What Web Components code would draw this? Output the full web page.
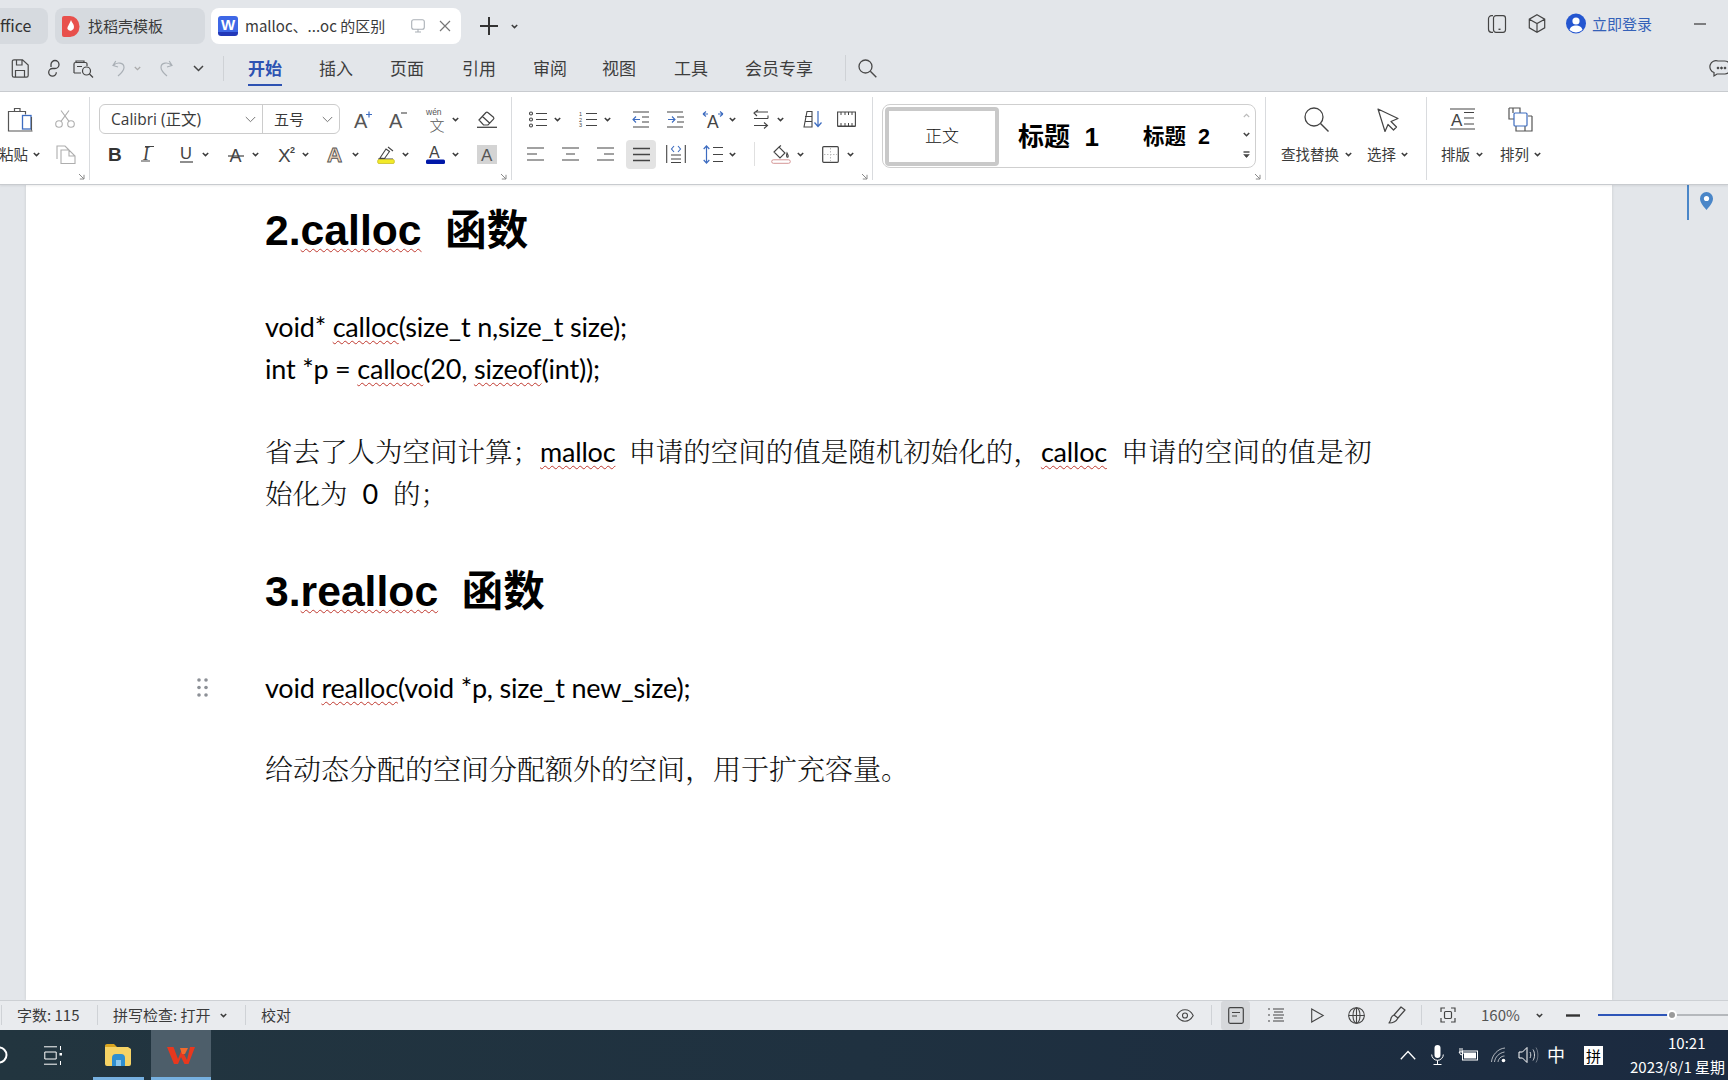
<!DOCTYPE html>
<html lang="zh"><head><meta charset="utf-8"><title>WPS</title>
<style>
html,body{margin:0;padding:0;width:1728px;height:1080px;overflow:hidden;background:#e3e6ea}
body{font-family:"Noto Sans CJK SC","Noto Sans",sans-serif}
</style></head><body>
<wps-app></wps-app>
<script>
const S='stroke="currentColor" fill="none"';
const T=(x,y,s,t,ex='')=>`<text x="${x}" y="${y}" font-size="${s}" font-family="'Liberation Sans',sans-serif" fill="currentColor" stroke="none" ${ex}>${t}</text>`;
const IC={
chev:[7,5,`<path d="M.8 1l2.7 2.6L6.2 1" stroke-width="1.5"/>`,'#3c3c3c'],
chevb:[11,7,`<path d="M1 1l4.5 4.5L10 1" stroke-width="1.5"/>`,'#444'],
chevg:[7,5,`<path d="M.8 1l2.7 2.6L6.2 1" stroke-width="1.3"/>`,'#aaa'],
chevl:[11,7,`<path d="M.8 1l4.7 4.7L10.2 1" stroke-width="1"/>`,'#777'],
save:[18,19,`<path d="M3 .8h8.5l5.7 5.2v10.5a1.7 1.7 0 0 1-1.7 1.7H3a1.7 1.7 0 0 1-1.7-1.7V2.500A1.7 1.700 0 0 1 3 .8zM5.500 1v5h5.500V1M4.500 18v-6.500h9V18" stroke-width="1.2"/>`,'#4a4a4a'],
link:[15,18,`<path d="M5 8V5.500a4 4 0 1 1 4 4H6.500a3.800 3.800 0 1 0 3.800 3.800" stroke-width="1.3"/>`,'#444'],
docs:[21,19,`<path d="M3 3.500V2h8v1.500M1 14V5a1.500 1.500 0 0 1 1.500-1.500h10a1.500 1.500 0 0 1 1.500 1.500v2M1 14h7M4 7.500h5" stroke-width="1.2"/><circle cx="13.500" cy="12" r="4" stroke-width="1.200"/><path d="M16.500 15l3.500 3.500" stroke-width="1.300"/>`,'#444'],
undo:[13,17,`<path d="M3.800 1L1 5.500l5 1.500M1.300 5.500C5 1.500 12 2.500 12 7.500c0 3.500-3 6-6 8.500" stroke-width="1.200"/>`,'#aab0b6'],
redo:[13,17,`<path d="M9.200 1L12 5.500 7 7M11.700 5.500C8 1.500 1 2.500 1 7.500c0 3.500 3 6 6 8.500" stroke-width="1.200"/>`,'#aab0b6'],
srch:[19,19,`<circle cx="7.500" cy="7.500" r="6.500" stroke-width="1.300"/><path d="M12.300 12.300l6 6" stroke-width="1.400"/>`,'#4a4a4a'],
bubble:[20,17,`<path d="M6 1h6a6.500 6.500 0 0 1 1 13H5l-3 2v-3.500A6 6 0 0 1 6 1z" stroke-width="1.200"/><circle cx="6" cy="8" r=".9" fill="currentColor"/><circle cx="9.500" cy="8" r=".9" fill="currentColor"/><circle cx="13" cy="8" r=".9" fill="currentColor"/>`,'#444'],
mon:[14,14,`<rect x=".7" y=".7" width="12.600" height="9.500" rx="2" stroke-width="1.100"/><path d="M4 13h6M7 10v3" stroke-width="1.100"/>`,'#aab0b6'],
x:[12,12,`<path d="M1 1l10 10M11 1L1 11" stroke-width="1.200"/>`,'#777'],
plus:[18,18,`<path d="M9 0v18M0 9h18" stroke-width="2"/>`,'#333'],
phone:[18,18,`<path d="M5 .7H3.500a3 3 0 0 0-3 3v10.600a3 3 0 0 0 3 3H5" stroke-width="1.200"/><rect x="5.500" y=".7" width="12" height="16.600" rx="2.500" stroke-width="1.200"/><path d="M10.500 14.300h2" stroke-width="1.400"/>`,'#444'],
cube:[18,19,`<path d="M9 .8l7.700 4.400v8.600L9 18.200 1.300 13.800V5.200zM1.300 5.200L9 9.600l7.700-4.400M9 9.600v8.600" stroke-width="1.200"/>`,'#444'],
user:[20,21,`<circle cx="10" cy="10.500" r="10" fill="#2456d0" stroke="none"/><circle cx="10" cy="8" r="3.600" fill="#fff" stroke="none"/><path d="M3.500 17c1-3.500 3.500-4.500 6.500-4.500s5.500 1 6.500 4.500a10 10 0 0 1-13 0z" fill="#fff" stroke="none"/>`,'#2456d0'],
min:[12,2,`<path d="M0 1h12" stroke-width="1.300"/>`,'#444'],
clip:[26,25,`<path d="M7.500 4.500H1.500V24H12M7.500 4.500V1.500h5.500v3h-5.500M13 4.500h5.500v3M12 24h13.500" stroke-width="1.200"/><rect x="15.500" y="8.500" width="8.500" height="13.500" stroke="#3d6cc0" stroke-width="1.300"/><path d="M24.500 10v13.500" stroke-width="1.100"/>`,'#555'],
sci:[20,18,`<circle cx="4" cy="14" r="3.300" stroke-width="1.100"/><circle cx="16" cy="14" r="3.300" stroke-width="1.100"/><path d="M6 11.300L14 .5M14 11.300L6 .5" stroke-width="1.100"/>`,'#aeaeae'],
copy:[20,19,`<path d="M1 14V1h8l4 4M5 18.500V5h8l6 6v7.500zM13 5v6h6" stroke-width="1.100"/>`,'#aeaeae'],
lau:[7,7,`<path d="M1 1l5 5M6 1.800V6H1.800" stroke-width="1"/>`,'#8a8a8a'],
ap:[18,18,T(0,17.500,20,'A')+`<path d="M12 4.500h6M15 1.500v6" stroke="#3d6cc0" stroke-width="1.200"/>`,'#555'],
am:[18,18,T(0,17.500,20,'A')+`<path d="M12 3h6" stroke-width="1.200"/>`,'#555'],
wen:[22,23,T(0,7,8.500,'wén','fill="#555"')+`<text x="3.500" y="23" font-size="15" font-family="'Noto Sans CJK SC'" fill="currentColor" stroke="none" font-weight="300">文</text>`,'#555'],
era:[20,18,`<path d="M2 10l7-7.500a1.300 1.300 0 0 1 1.800 0l5.700 4.800a1.300 1.300 0 0 1 0 1.800L11 15H6.500zM5.500 6.500l7 6.500" stroke-width="1.200"/><path d="M0 17.300h20" stroke-width="1.300"/>`,'#444'],
B:[12,18,T(0,16,19,'B','font-weight="bold"'),'#333'],
I2:[14,18,`<text x="2" y="15" font-size="18" font-style="italic" font-family="'Liberation Serif',serif" fill="currentColor" stroke="none">I</text><path d="M4 1.500h9M0 16h9" stroke-width="1"/>`,'#444'],
U:[13,18,T(0,14,16.500,'U')+`<path d="M0 17h13" stroke-width="1.200"/>`,'#444'],
st:[16,18,T(1.500,17,18,'A')+`<path d="M0 11h16" stroke-width="1.200"/>`,'#444'],
X2:[18,18,T(0,17,19,'X')+T(12,8,9,'2','font-weight="bold"'),'#444'],
AE:[18,18,`<text x="0" y="17" font-size="21" font-weight="bold" font-family="'Liberation Sans',sans-serif" fill="#f2d8c0" stroke="#555" stroke-width=".9">A</text>`,'#555'],
hl:[18,19,`<path d="M3 13L9 4l3.500 2.500-5 7zM11 2l5 4M1 14h15" stroke-width="1.100"/><rect x=".7" y="14.500" width="16.600" height="4" rx="1.200" fill="#f2ea28" stroke="#c8be2a" stroke-width=".8"/>`,'#444'],
Ab:[19,19,T(3,13,16,'A')+`<rect x="0" y="14.500" width="19" height="4.500" rx="1.500" fill="#0018a8" stroke="none"/>`,'#444'],
As:[20,19,`<rect width="20" height="19" fill="#d4d4d4" stroke="none"/>`+T(4,16,17,'A'),'#555'],
bul:[18,17,`<circle cx="2" cy="2.500" r="1.500" stroke-width="1.100"/><circle cx="2" cy="8.500" r="1.500" stroke-width="1.100"/><circle cx="2" cy="14.500" r="1.500" stroke-width="1.100"/><path d="M7 2.500h11M7 8.500h11M7 14.500h11" stroke-width="1.100"/>`,'#444'],
num:[18,17,T(0,5,5.500,'1')+T(0,10.500,5.500,'2')+T(0,16,5.500,'3')+`<path d="M7 2.500h11M7 8.500h11M7 14.500h11" stroke-width="1.100"/>`,'#444'],
outd:[17,17,`<path d="M1 1h16M1 16h16M10 6h7M10 11h7" stroke-width="1.100"/><path d="M8 8.500H1M4 5.500l-3 3 3 3" stroke="#3d6cc0" stroke-width="1.100"/>`,'#444'],
ind:[17,17,`<path d="M0 1h16M0 16h16M10 6h7M10 11h7" stroke-width="1.100"/><path d="M1 8.500h7M5 5.500l3 3-3 3" stroke="#3d6cc0" stroke-width="1.100"/>`,'#444'],
Aa:[20,18,T(4,17.500,17.500,'A')+`<path d="M0 4l3-2.500M0 4l3 2.500M0 4h5M20 4l-3-2.500M20 4l-3 2.500M20 4h-5" stroke="#3d6cc0" stroke-width="1.100"/>`,'#444'],
swp:[16,18,`<path d="M15 2H1.500M5 0 1 3l3 3M1 8.500h14M1 15.500h14M11 12.500l3.500 3-3.500 3M15 5.500v3" stroke-width="1.100"/>`,'#444'],
sort:[20,18,`<path d="M2 17L5 1.500h5V17zM3.500 11.500H10M3 6.500h7" stroke-width="1.100"/><path d="M16 1v15M12.500 12.500l3.500 4 3.500-4" stroke="#3d6cc0" stroke-width="1.200"/>`,'#444'],
rul:[19,16,`<path d="M.6 15V1h17.800v14zM.6 15.400h17.800" stroke-width="1.100"/><path d="M4 1v3M8 1v3M11.500 1v3M15 1v3M4 15v-3M8 15v-3M11.500 15v-3M15 15v-3" stroke-width="1"/>`,'#444'],
al:[17,16,`<path d="M0 2h17M0 8h10M0 14h17" stroke-width="1.200"/>`,'#444'],
ac:[17,16,`<path d="M0 2h17M4 8h9M0 14h17" stroke-width="1.200"/>`,'#444'],
ar:[17,16,`<path d="M0 2h17M7 8h10M0 14h17" stroke-width="1.200"/>`,'#444'],
aj:[17,15,`<path d="M0 1.500h17M0 7.500h17M0 13.500h17" stroke-width="1.400"/>`,'#444'],
dist:[20,18,`<path d="M.7 0v18M19.300 0v18M5 10h10M5 14h10M5 17.500h10" stroke-width="1.100"/><path d="M8 1L5.500 4 8 7M12 1l2.500 3L12 7" stroke="#3d6cc0" stroke-width="1.100"/>`,'#444'],
lsp:[20,19,`<path d="M3.500 .8v17.400M.7 4l2.800-3.200L6.300 4M.7 15l2.800 3.200L6.300 15" stroke="#3d6cc0" stroke-width="1.200"/><path d="M10 2.500h10M10 9.500h10M10 16.500h10" stroke-width="1.200"/>`,'#444'],
fill:[20,19,`<path d="M3 7l5-5 6 6-5 5zM8 2l2-1.500M16 8c1 2 2 3 1 4s-2-1-1-4z" stroke-width="1.100"/><rect x=".7" y="14.800" width="18.600" height="3.500" rx="1.700" stroke="#d08a8a" stroke-width=".9"/>`,'#444'],
bor:[17,17,`<rect x=".7" y=".7" width="15.600" height="15.600" rx="1" stroke-width="1.200"/><path d="M8.500 2v13M2 8.500h13" stroke="#bbb" stroke-width="1" stroke-dasharray="1.500 1.500"/>`,'#444'],
up:[7,5,`<path d="M.8 4l2.700-2.700L6.200 4" stroke-width="1.100"/>`,'#bbb'],
dn:[7,5,`<path d="M.8 1l2.700 2.700L6.200 1" stroke-width="1.600"/>`,'#444'],
mor:[7,8,`<path d="M.5 1h6" stroke-width="1.400"/><path d="M.8 3.200L3.500 6.400l2.700-3.200" fill="#444" stroke-width="1"/>`,'#444'],
find:[25,25,`<circle cx="10" cy="10" r="9" stroke-width="1.300"/><path d="M16.500 16.500l8 8" stroke-width="1.400"/>`,'#444'],
cur:[22,22,`<path d="M1 1l20 9.500-7 3 5.500 5.500-3 3-5.500-5.500-3 7z" stroke-width="1.200" stroke-linejoin="round"/>`,'#444'],
lay:[25,22,`<path d="M0 1h25M0 21h25" stroke-width="1.200"/><path d="M14 4.500h10M14 10h10M14 16h10" stroke-width="1.100"/>`+T(1,18,17,'A'),'#444'],
arr:[25,25,`<path d="M5 6V1h7v5M1 1h11v5M1 1v11h5M17 19v5H8v-5M24 9h-4M24 9v15h-7" stroke-width="1.200"/><rect x="6" y="6" width="13" height="13" rx="1" stroke="#3d6cc0" stroke-width="1.200"/>`,'#555'],
eye:[18,13,`<path d="M.8 6.500C3 2.500 6 .8 9 .8s6 1.700 8.200 5.700C15 10.500 12 12.200 9 12.200S3 10.500.8 6.500z" stroke-width="1.100"/><circle cx="9" cy="6.500" r="2.500" stroke-width="1.100"/>`,'#444'],
pv:[16,17,`<rect x=".7" y=".7" width="14.600" height="15.600" rx="1.500" stroke-width="1.200"/><path d="M4 5.500h8M4 9h5" stroke-width="1.200"/>`,'#444'],
ol:[16,14,`<path d="M5 1h11M5 7h11M5 13h11M0 1h2M0 7h2M0 13h2M6 4h9M6 10h9" stroke-width="1.100"/>`,'#444'],
pl:[13,15,`<path d="M.7.9l11.500 6.600L.7 14.100z" stroke-width="1.100"/>`,'#444'],
gl:[17,17,`<circle cx="8.500" cy="8.500" r="7.800" stroke-width="1.100"/><ellipse cx="8.500" cy="8.500" rx="3.500" ry="7.800" stroke-width="1.100"/><path d="M.7 8.500h15.600M8.500.7v15.600" stroke-width="1.100"/>`,'#444'],
pen:[18,18,`<path d="M6 9l7-8 4 3-7 8zM6 9c-3 1-3 3-3.500 5.500L1 17c3 0 7-1 9-5z" stroke-width="1.200" stroke-linejoin="round"/>`,'#444'],
foc:[16,16,`<path d="M1 5V1h4M11 1h4v4M15 11v4h-4M5 15H1v-4" stroke-width="1.200"/><rect x="4.500" y="4.500" width="7" height="7" rx="1.200" stroke-width="1.200"/>`,'#444'],
zm:[14,3,`<path d="M0 1.500h14" stroke-width="2.400"/>`,'#333'],
cor:[8,18,`<circle cx="-1" cy="9" r="7.500" stroke-width="2"/>`,'#fff'],
tv:[19,19,`<path d="M0 .8h13M0 18.200h13M.8 6h11.400v7H.8zM16.500 0v4M16.500 15v4" stroke-width="1"/><rect x="15.500" y="7" width="2.500" height="2.500" fill="#fff" stroke="none"/>`,'#fff'],
ex:[27,24,`<path d="M0 4a2 2 0 0 1 2-2h7l2 2h12l3 2v15a2 2 0 0 1-2 2H2a2 2 0 0 1-2-2z" fill="#f6d365" stroke="none"/><path d="M0 3a2 2 0 0 1 2-2h7l3 3H0z" fill="#d9a520" stroke="none"/><path d="M7 23v-8a4 4 0 0 1 4-4h5a4 4 0 0 1 4 4v8h-4v-6h-5v6z" fill="#2f8fd0" stroke="none"/><rect x="11" y="17" width="5" height="6" fill="#8cc8ec" stroke="none"/>`,'#fff'],
wps:[30,20,`<path d="M1 2h6.500l4.500 12L16 4h4l-2 5 3 6 3-13h5l-6.500 17h-4L15 12l-3 7H8z" fill="#e8381e" stroke="none"/><path d="M14 3h8l-3 6h-3z" fill="#f26a2c" stroke="none"/>`,'#e8381e'],
car:[16,10,`<path d="M.8 9.200L8 1.500l7.200 7.700" stroke-width="1.300"/>`,'#fff'],
mic:[13,20,`<rect x="3.500" y="0" width="6" height="13" rx="3" fill="#fff" stroke="none"/><path d="M.7 9.500a5.800 5.800 0 0 0 11.600 0M6.500 15.500V20M2.500 19.500h8" stroke-width="1"/>`,'#fff'],
bat:[19,14,`<rect x="3.500" y="3" width="15" height="9" stroke-width="1"/><rect x="5" y="4.500" width="12" height="6" fill="#fff" stroke="none"/><path d="M1 0v4M3 0v4M0 4h4v2L2 7z" stroke-width="1"/>`,'#fff'],
wf:[16,16,`<path d="M.5 15C1 8 7 1.500 14 1M3.500 15c.5-5 4.500-9 10-10M7 15c.3-3 3-6 6.500-6" stroke-width="1" opacity=".65"/><circle cx="12.500" cy="13.500" r="1.800" fill="#fff" stroke="none"/>`,'#fff'],
spk:[20,18,`<path d="M1 6h3.500L9 1.500v15L4.500 12H1z" stroke-width="1"/><path d="M12 6c1 1.800 1 4.200 0 6M15 3.500c2 3 2 8 0 11" stroke-width="1" opacity=".8"/><path d="M18 1.500c2.500 4 2.500 11 0 15" stroke-width="1" opacity=".35"/>`,'#fff'],
pin:[13,18,`<path d="M6.500 0a6.500 6.500 0 0 1 6.500 6.500C13 11 9 15 6.500 18 4 15 0 11 0 6.500A6.500 6.500 0 0 1 6.500 0z" fill="#4a86c8" stroke="none"/><circle cx="6.500" cy="6.500" r="2.600" fill="#fff" stroke="none"/>`,'#4a86c8'],
dots:[11,19,`<g fill="#8c9096" stroke="none"><circle cx="2" cy="2" r="1.800"/><circle cx="9" cy="2" r="1.800"/><circle cx="2" cy="9.500" r="1.800"/><circle cx="9" cy="9.500" r="1.800"/><circle cx="2" cy="17" r="1.800"/><circle cx="9" cy="17" r="1.800"/></g>`,'#888']
};
class XI extends HTMLElement{connectedCallback(){ if(this.shadowRoot)return;
 const [w,h,b,c]=IC[this.getAttribute('n')];
 const m=this.getAttribute('m')||0;
 this.attachShadow({mode:'open'}).innerHTML=`<style>:host{display:inline-flex;flex:none;width:${w}px;height:${h}px;margin-left:${m}px;color:${c}}svg{display:block;overflow:visible}</style><svg width="${w}" height="${h}" viewBox="0 0 ${w} ${h}" ${S}>${b}</svg>`;
}}
customElements.define('x-i',XI);
class XT extends HTMLElement{connectedCallback(){ if(this.shadowRoot)return;
 const g=k=>this.getAttribute(k);
 this.attachShadow({mode:'open'}).innerHTML=`<style>:host{display:inline-block;flex:none;white-space:nowrap;margin-left:${g('m')||0}px;${g('w')?`width:${g('w')}px;`:''}font-size:${g('s')||15}px;color:${g('c')||'#3a3a3a'};font-weight:${g('fw')||400};line-height:1.2}</style><slot></slot>`;
}}
customElements.define('x-t',XT);
class XD extends HTMLElement{connectedCallback(){ if(this.shadowRoot)return;
 this.attachShadow({mode:'open'}).innerHTML=`<style>:host{display:block;flex:none;width:1px;height:${this.getAttribute('h')||24}px;margin-left:${this.getAttribute('m')||0}px;background:${this.getAttribute('c')||'#cfd2d6'}}</style>`;
}}
customElements.define('x-d',XD);
const plain=(name,css,html='<slot></slot>')=>customElements.define(name,class extends HTMLElement{constructor(){super();this.attachShadow({mode:'open'}).innerHTML=`<style>${css}</style>${html}`}});

plain('app-tab',`:host{display:flex;flex:none;align-items:center;height:36px;border-radius:8px;background:#d6dadf;box-sizing:border-box}
:host([active]){background:#fff}`);
plain('red-logo',`:host{display:block;flex:none;width:18px;height:21px;margin-left:7px}`,`<svg width="18" height="21" viewBox="0 0 18 21"><path d="M2 0h6a9.500 10.500 0 0 1 0 21H2a2 2 0 0 1-2-2V2a2 2 0 0 1 2-2z" fill="#e8504c"/><path d="M9 4c1 3 3 4 3 7a3.500 3.500 0 0 1-6.500 2C5 11 7 9 9 4z" fill="#fff"/></svg>`);
plain('w-logo',`:host{display:flex;flex:none;width:20px;height:20px;margin-left:7px;background:linear-gradient(#3e67e6 80%,#2238b8 80%);border-radius:3px;color:#fff;font:bold 15px "Liberation Sans",sans-serif;align-items:flex-start;justify-content:center;line-height:18px}`);
plain('title-bar',`:host{display:flex;flex:none;height:45px;align-items:flex-end;box-sizing:border-box;padding-bottom:1px;background:#e3e6ea}`);
plain('menu-bar',`:host{display:flex;flex:none;height:47px;align-items:center;background:#e3e6ea;box-sizing:border-box;border-bottom:1px solid #c9ccd0;overflow:hidden}`);
plain('menu-tab',`:host{display:block;flex:none;position:relative;font-size:17px;color:#3d3d3d;line-height:24px;margin-left:var(--m,0)}
:host([on]){color:#2d52b2;font-weight:700}
:host([on])::after{content:"";position:absolute;left:0;right:0;top:28px;height:2px;background:#2d52b2}`);
plain('rib-bon',`:host{display:flex;flex:none;height:93px;background:#fff;box-sizing:border-box;border-bottom:1px solid #c8cbcf;box-shadow:0 1px 2px rgba(0,0,0,.08);position:relative;z-index:2;padding-top:5px;overflow:hidden}`);
plain('rib-group',`:host{display:flex;flex-direction:column;flex:none;height:83px;box-sizing:border-box;border-right:1px solid #d9dbde;position:relative}`);
plain('row-a',`:host{display:flex;align-items:center;height:44px;flex:none}`);
plain('row-b',`:host{display:flex;align-items:center;height:26px;flex:none}`);
plain('lau-pos',`:host{position:absolute;right:4px;top:76px;display:block;line-height:0}`);
plain('font-combo',`:host{display:flex;align-items:center;flex:none;width:241px;height:30px;box-sizing:border-box;margin-left:9px;border:1px solid #ccc;border-radius:6px;font-size:15px;color:#3a3a3a}`);
plain('sel-btn',`:host{display:flex;align-items:center;justify-content:center;flex:none;width:30px;height:29px;margin-left:12px;background:#e3e3e3;border-radius:4px}`);
plain('style-box',`:host{display:flex;align-items:center;flex:none;width:374px;height:64px;box-sizing:border-box;margin:7px 0 0 9px;border:1px solid #cfcfcf;border-radius:8px}`);
plain('style-sel',`:host{display:flex;align-items:center;justify-content:center;flex:none;width:114px;height:59px;margin-left:2px;box-sizing:border-box;border:4px solid #c9c9c9;border-radius:4px;font-size:17px;color:#111;font-weight:300;padding-bottom:4px}`);
plain('style-arrows',`:host{display:flex;flex-direction:column;align-items:center;justify-content:space-between;height:46px;margin-left:28px;flex:none}`);
plain('doc-view',`:host{display:flex;flex:1;min-height:0;background:#e3e6ea;overflow:hidden}`);
plain('doc-page',`:host{display:block;flex:none;width:1586px;margin-left:26px;background:#fff;box-sizing:border-box;padding:15px 0 0 239px;position:relative;box-shadow:0 0 3px rgba(0,0,0,.12)}`);
plain('doc-rail',`:host{display:flex;flex:none;justify-content:center;align-items:center;width:36px;height:35px;margin-left:75px;border-left:2px solid #4a86c8;box-sizing:border-box;padding:0 0 3px 0}`);
plain('doc-h',`:host{display:block;height:60px;font:bold 42.670px/60px "Liberation Sans","Noto Sans CJK SC",sans-serif;color:#000;white-space:pre}`);
plain('doc-cjk',`:host{font-size:41.500px}`);
plain('doc-p',`:host{display:block;height:42px;line-height:42px;font-size:27.500px;color:#111;white-space:pre;font-family:"Noto Serif CJK SC","Noto Sans CJK SC",serif;font-weight:300}`);
plain('la-t',`:host{font-family:Lato,"Open Sans",sans-serif;font-size:27px;letter-spacing:-.2px;color:#000;font-weight:400}`);
plain('sp-err',`:host{text-decoration:underline wavy #c0392f 1px;text-underline-offset:3px}`);
plain('drag-dots',`:host{position:absolute;left:171px;top:493px;display:block;line-height:0}`);
plain('status-bar',`:host{display:flex;flex:none;height:30px;align-items:center;background:#e9ebee;box-sizing:border-box;border-top:1px solid #cdd0d4;font-size:14px;overflow:hidden;padding-bottom:1px}`);
plain('pv-btn',`:host{display:flex;align-items:center;justify-content:center;flex:none;width:29px;height:29px;margin-left:9px;background:#d6d8db;border-radius:3px}`);
plain('zoom-slider',`:host{display:block;flex:none;position:relative;width:131px;height:2px;margin-left:18px;background:#b5b8bc}`,`<style>i{position:absolute;left:0;top:0;width:70px;height:2px;background:#2d55b8}b{position:absolute;left:69px;top:-4px;width:6px;height:6px;border-radius:50%;background:#9a9a9a;border:2px solid #fff}</style><i></i><b></b>`);
plain('task-bar',`:host{display:flex;flex:none;height:50px;align-items:center;background:linear-gradient(90deg,#22353f,#1f3140 50%,#1b2a40);color:#fff;overflow:hidden}`);
plain('task-cell',`:host{display:flex;flex:none;align-items:center;justify-content:center;height:50px;box-sizing:border-box;border-bottom:3px solid #76b0e0;padding-top:2px}
:host([on]){background:#4d5e6a}`);
plain('ime-box',`:host{display:flex;align-items:center;justify-content:center;flex:none;width:19px;height:19px;margin-left:19px;background:#fff;color:#000;font-size:15px;line-height:19px}`);
plain('clock-box',`:host{display:block;flex:none;margin-left:27px;width:110px;font-size:15px;color:#fff;line-height:24px;white-space:nowrap}`);

const chev=m=>`<x-i n="chev" m="${m}"></x-i>`;
class WpsApp extends HTMLElement{constructor(){super();
this.attachShadow({mode:'open'}).innerHTML=`<style>
:host{display:flex;flex-direction:column;width:1728px;height:1080px;overflow:hidden}
</style>
<title-bar>
 <app-tab style="width:48px;border-radius:0 8px 8px 0;justify-content:flex-start"><x-t s="16" style="color:#333">ffice</x-t></app-tab>
 <app-tab style="width:150px;margin-left:7px"><red-logo></red-logo><x-t s="15" m="8" w="76">找稻壳模板</x-t></app-tab>
 <app-tab active style="width:250px;margin-left:6px"><w-logo>W</w-logo><x-t s="15" m="7" w="142">malloc、...oc 的区别</x-t><x-i n="mon" m="24"></x-i><x-i n="x" m="14"></x-i></app-tab>
 <x-i n="plus" m="19" style="align-self:center;margin-bottom:-8px"></x-i><x-i n="chev" m="13" style="align-self:center;margin-bottom:-8px"></x-i>
 <x-i n="phone" m="970" style="align-self:center;margin-bottom:-3px"></x-i><x-i n="cube" m="22" style="align-self:center;margin-bottom:-3px"></x-i><x-i n="user" m="20" style="align-self:center;margin-bottom:-3px"></x-i>
 <x-t s="15" c="#3461b8" m="6" w="60" style="align-self:center;margin-bottom:-3px">立即登录</x-t>
 <x-i n="min" m="42" style="align-self:center;margin-bottom:-3px"></x-i>
</title-bar>
<menu-bar>
 <x-i n="save" m="11"></x-i><x-i n="link" m="17"></x-i><x-i n="docs" m="12"></x-i><x-i n="undo" m="18"></x-i><x-i n="chevg" m="9"></x-i><x-i n="redo" m="19"></x-i><x-i n="chevb" m="20"></x-i><x-d m="19" h="25"></x-d>
 <menu-tab on style="--m:24px">开始</menu-tab><menu-tab style="--m:37px">插入</menu-tab><menu-tab style="--m:37px">页面</menu-tab><menu-tab style="--m:38px">引用</menu-tab><menu-tab style="--m:37px">审阅</menu-tab><menu-tab style="--m:35px">视图</menu-tab><menu-tab style="--m:38px">工具</menu-tab><menu-tab style="--m:37px">会员专享</menu-tab>
 <x-d m="32" h="26"></x-d><x-i n="srch" m="12"></x-i><x-i n="bubble" m="835"></x-i>
</menu-bar>
<rib-bon>
 <rib-group style="width:90px">
  <row-a><x-i n="clip" m="7"></x-i><x-i n="sci" m="22"></x-i></row-a>
  <row-b><x-t s="14.500" w="30" style="margin-left:-1px">粘贴</x-t>${chev(4)}<x-i n="copy" m="16"></x-i></row-b>
  <lau-pos><x-i n="lau"></x-i></lau-pos>
 </rib-group>
 <rib-group style="width:422px">
  <row-a><font-combo><x-t s="15.500" m="11" w="134" style="font-family:'Open Sans','Noto Sans CJK SC'">Calibri (正文)</x-t><x-i n="chevl"></x-i><x-d m="6" h="28" c="#ccc"></x-d><x-t s="15" m="11" w="30">五号</x-t><x-i n="chevl" m="18"></x-i></font-combo>
   <x-i n="ap" m="14"></x-i><x-i n="am" m="17"></x-i><x-i n="wen" m="19"></x-i>${chev(4)}<x-i n="era" m="18"></x-i></row-a>
  <row-b><x-i n="B" m="18"></x-i><x-i n="I2" m="21"></x-i><x-i n="U" m="25"></x-i>${chev(9)}<x-i n="st" m="19"></x-i>${chev(8)}<x-i n="X2" m="19"></x-i>${chev(6)}<x-i n="AE" m="18"></x-i>${chev(7)}<x-i n="hl" m="18"></x-i>${chev(7)}<x-i n="Ab" m="17"></x-i>${chev(7)}<x-i n="As" m="18"></x-i></row-b>
  <lau-pos><x-i n="lau"></x-i></lau-pos>
 </rib-group>
 <rib-group style="width:361px">
  <row-a><x-i n="bul" m="17"></x-i>${chev(7)}<x-i n="num" m="18"></x-i>${chev(7)}<x-i n="outd" m="21"></x-i><x-i n="ind" m="18"></x-i><x-i n="Aa" m="19"></x-i>${chev(6)}<x-i n="swp" m="17"></x-i>${chev(8)}<x-i n="sort" m="18"></x-i><x-i n="rul" m="15"></x-i></row-a>
  <row-b><x-i n="al" m="15"></x-i><x-i n="ac" m="18"></x-i><x-i n="ar" m="18"></x-i><sel-btn><x-i n="aj"></x-i></sel-btn><x-i n="dist" m="10"></x-i><x-i n="lsp" m="17"></x-i>${chev(6)}<x-d m="18" h="24" c="#e0e0e0"></x-d><x-i n="fill" m="16"></x-i>${chev(6)}<x-i n="bor" m="18"></x-i>${chev(8)}</row-b>
  <lau-pos><x-i n="lau"></x-i></lau-pos>
 </rib-group>
 <rib-group style="width:393px">
  <style-box><style-sel>正文</style-sel><x-t s="26" fw="700" c="#000" m="19" w="88" style="font-family:'Liberation Sans','Noto Sans CJK SC';padding-top:3px">标题 &nbsp;1</x-t><x-t s="21.500" fw="700" c="#000" m="37" w="72" style="font-family:'Liberation Sans','Noto Sans CJK SC';padding-top:3px">标题 &nbsp;2</x-t><style-arrows><x-i n="up"></x-i><x-i n="dn"></x-i><x-i n="mor"></x-i></style-arrows></style-box>
  <lau-pos><x-i n="lau"></x-i></lau-pos>
 </rib-group>
 <rib-group style="width:161px">
  <row-a><x-i n="find" m="38"></x-i><x-i n="cur" m="48"></x-i></row-a>
  <row-b><x-t s="14.500" m="15" w="60">查找替换</x-t>${chev(4)}<x-t s="14.500" m="15" w="30">选择</x-t>${chev(4)}</row-b>
 </rib-group>
 <rib-group style="border:0;width:300px">
  <row-a><x-i n="lay" m="23"></x-i><x-i n="arr" m="33"></x-i></row-a>
  <row-b><x-t s="14.500" m="14" w="30">排版</x-t>${chev(5)}<x-t s="14.500" m="17" w="30">排列</x-t>${chev(4)}</row-b>
 </rib-group>
</rib-bon>
<doc-view>
 <doc-page>
  <doc-h>2.<sp-err>calloc</sp-err>  <doc-cjk>函数</doc-cjk></doc-h>
  <doc-p style="margin-top:44px"><la-t>void* <sp-err>calloc</sp-err>(size_t n,size_t size);</la-t></doc-p>
  <doc-p><la-t>int *p = <sp-err>calloc</sp-err>(20, <sp-err>sizeof</sp-err>(int));</la-t></doc-p>
  <doc-p style="margin-top:41px">省去了人为空间计算；<la-t><sp-err>malloc</sp-err></la-t><span style="margin-left:13px">申请的空间的值是随机初始化的，</span><la-t><sp-err>calloc</sp-err></la-t><span style="margin-left:14px;letter-spacing:.4px">申请的空间的值是初</span></doc-p>
  <doc-p>始化为<la-t style="margin:0 15px">0</la-t>的；</doc-p>
  <doc-h style="margin-top:48px">3.<sp-err>realloc</sp-err>  <doc-cjk>函数</doc-cjk></doc-h>
  <doc-p style="margin-top:44px"><la-t>void <sp-err>realloc</sp-err>(void *p, size_t new_size);</la-t></doc-p>
  <doc-p style="margin-top:40px;font-size:28px">给动态分配的空间分配额外的空间，用于扩充容量。</doc-p>
  <drag-dots><x-i n="dots"></x-i></drag-dots>
 </doc-page>
 <doc-rail><x-i n="pin"></x-i></doc-rail>
</doc-view>
<status-bar>
 <x-d m="1" h="20"></x-d><x-t s="15" m="15" w="64">字数: 115</x-t><x-d m="16" h="20"></x-d><x-t s="15" m="15" w="98">拼写检查: 打开</x-t>${chev(9)}<x-d m="18" h="20"></x-d><x-t s="15" m="15" w="30">校对</x-t>
 <x-i n="eye" m="885"></x-i><x-d m="17" h="20"></x-d><pv-btn><x-i n="pv"></x-i></pv-btn><x-i n="ol" m="18"></x-i><x-i n="pl" m="27"></x-i><x-i n="gl" m="24"></x-i><x-i n="pen" m="23"></x-i><x-d m="15" h="20"></x-d><x-i n="foc" m="18"></x-i><x-t s="15" m="25" w="40" c="#555">160%</x-t>${chev(15)}<x-i n="zm" m="23"></x-i><zoom-slider></zoom-slider>
</status-bar>
<task-bar>
 <x-i n="cor"></x-i><x-i n="tv" m="36"></x-i>
 <task-cell style="width:51px;margin-left:30px"><x-i n="ex"></x-i></task-cell>
 <task-cell on style="width:60px;margin-left:7px"><x-i n="wps"></x-i></task-cell>
 <x-i n="car" m="1189"></x-i><x-i n="mic" m="15"></x-i><x-i n="bat" m="15"></x-i><x-i n="wf" m="13"></x-i><x-i n="spk" m="11"></x-i>
 <x-t s="18" c="#fff" m="9" w="18">中</x-t><ime-box>拼</ime-box>
 <clock-box><div style="padding-left:38px">10:21</div><div>2023/8/1 星期</div></clock-box>
</task-bar>`;
}}
customElements.define('wps-app',WpsApp);
</script>
</body></html>
